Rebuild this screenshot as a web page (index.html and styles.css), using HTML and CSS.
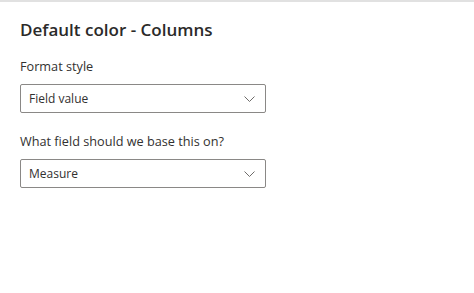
FILE: index.html
```html
<!DOCTYPE html>
<html lang="en">
<head>
  <meta charset="UTF-8">
  <meta name="viewport" content="width=device-width, initial-scale=1.0">
  <title>Default color - Columns</title>
  <link rel="stylesheet" href="styles.css">
</head>
<body>
<div class="pane">
  <h1 class="title">Default color - Columns</h1>

  <div class="field">
    <label class="field-label">Format style</label>
    <div class="dropdown">
      <span class="dropdown-value">Field value</span>
      <svg class="chevron" width="11" height="6" viewBox="0 0 11 6">
        <path d="M0.5 0.5 L5.5 5.5 L10.5 0.5" fill="none" stroke="#6e6c6a" stroke-width="1"/>
      </svg>
    </div>
  </div>

  <div class="field">
    <label class="field-label">What field should we base this on?</label>
    <div class="dropdown">
      <span class="dropdown-value">Measure</span>
      <svg class="chevron" width="11" height="6" viewBox="0 0 11 6">
        <path d="M0.5 0.5 L5.5 5.5 L10.5 0.5" fill="none" stroke="#6e6c6a" stroke-width="1"/>
      </svg>
    </div>
  </div>
</div>
</body>
</html>
```

FILE: styles.css
```css
body {
  font-family: 'Open Sans', 'Noto Sans', sans-serif;
  margin: 0;
  padding: 0;
  background-color: #fff;
  color: #252423;
}

.pane {
  border-top: 2px solid #e1e1e1;
  padding: 16px 20px 0 20px;
}

.title {
  margin: 0 0 14px 0;
  font-size: 17px;
  font-weight: 600;
  line-height: 24px;
  color: #2b2a29;
}

.field {
  display: flex;
  flex-direction: column;
  width: 246px;
  margin-bottom: 18px;
}

.field-label {
  font-size: 12.7px;
  line-height: 20px;
  color: #323130;
  margin-bottom: 8px;
}

.dropdown {
  display: flex;
  align-items: center;
  justify-content: space-between;
  height: 27px;
  padding: 0 10px 0 8px;
  border: 1px solid #8a8886;
  border-radius: 2px;
}

.dropdown-value {
  font-size: 12px;
  color: #323130;
}

.chevron {
  display: block;
}
```
